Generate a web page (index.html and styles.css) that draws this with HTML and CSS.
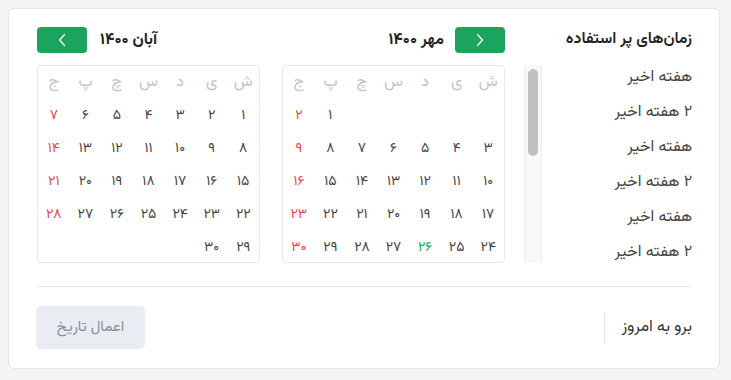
FILE: index.html
```html
<!DOCTYPE html>
<html lang="fa" dir="rtl">
<head>
  <meta charset="UTF-8" />
  <title>انتخاب تاریخ</title>
  <link rel="stylesheet" href="styles.css">
</head>
<body>
  <div class="picker">
    <div class="picker-top">
      <div class="shortcuts">
        <h3 class="shortcuts-title">زمان‌های پر استفاده</h3>
        <div class="shortcuts-body">
          <ul class="shortcuts-list">
            <li>هفته اخیر</li>
            <li>۲ هفته اخیر</li>
            <li>هفته اخیر</li>
            <li>۲ هفته اخیر</li>
            <li>هفته اخیر</li>
            <li>۲ هفته اخیر</li>
          </ul>
          <div class="scroll-track"><div class="scroll-thumb"></div></div>
        </div>
      </div>

      <!-- ماه جاری -->
      <div class="month">
        <div class="month-head">
          <button class="nav-btn">
            <svg width="8" height="14" viewBox="0 0 8 14"><polyline points="1.5,1.5 6.5,7 1.5,12.5" fill="none" stroke="#fff" stroke-width="1.3" stroke-linecap="round" stroke-linejoin="round"/></svg>
          </button>
          <span class="month-title">مهر ۱۴۰۰</span>
        </div>
        <div class="days">
          <span class="wd">ش</span><span class="wd">ی</span><span class="wd">د</span><span class="wd">س</span><span class="wd">چ</span><span class="wd">پ</span><span class="wd">ج</span>
          <span></span><span></span><span></span><span></span><span></span><span>۱</span><span class="fri">۲</span>
          <span>۳</span><span>۴</span><span>۵</span><span>۶</span><span>۷</span><span>۸</span><span class="fri">۹</span>
          <span>۱۰</span><span>۱۱</span><span>۱۲</span><span>۱۳</span><span>۱۴</span><span>۱۵</span><span class="fri">۱۶</span>
          <span>۱۷</span><span>۱۸</span><span>۱۹</span><span>۲۰</span><span>۲۱</span><span>۲۲</span><span class="fri">۲۳</span>
          <span>۲۴</span><span>۲۵</span><span class="today">۲۶</span><span>۲۷</span><span>۲۸</span><span>۲۹</span><span class="fri">۳۰</span>
        </div>
      </div>

      <!-- ماه بعد -->
      <div class="month">
        <div class="month-head end">
          <span class="month-title">آبان ۱۴۰۰</span>
          <button class="nav-btn">
            <svg width="8" height="14" viewBox="0 0 8 14"><polyline points="6.5,1.5 1.5,7 6.5,12.5" fill="none" stroke="#fff" stroke-width="1.3" stroke-linecap="round" stroke-linejoin="round"/></svg>
          </button>
        </div>
        <div class="days">
          <span class="wd">ش</span><span class="wd">ی</span><span class="wd">د</span><span class="wd">س</span><span class="wd">چ</span><span class="wd">پ</span><span class="wd">ج</span>
          <span>۱</span><span>۲</span><span>۳</span><span>۴</span><span>۵</span><span>۶</span><span class="fri">۷</span>
          <span>۸</span><span>۹</span><span>۱۰</span><span>۱۱</span><span>۱۲</span><span>۱۳</span><span class="fri">۱۴</span>
          <span>۱۵</span><span>۱۶</span><span>۱۷</span><span>۱۸</span><span>۱۹</span><span>۲۰</span><span class="fri">۲۱</span>
          <span>۲۲</span><span>۲۳</span><span>۲۴</span><span>۲۵</span><span>۲۶</span><span>۲۷</span><span class="fri">۲۸</span>
          <span>۲۹</span><span>۳۰</span>
        </div>
      </div>
    </div>

    <div class="picker-foot">
      <span class="today-link">برو به امروز</span>
      <button class="apply-btn" disabled>اعمال تاریخ</button>
    </div>
  </div>
</body>
</html>
```

FILE: styles.css
```css
body {
  margin: 0;
  padding: 8px 11px 8px 8px;
  background: #f4f4f5;
  font-family: "Vazirmatn", "Noto Sans Arabic", "DejaVu Sans", sans-serif;
  color: #333;
}

.picker {
  box-sizing: border-box;
  width: 712px;
  height: 361px;
  background: white;
  border: 1px solid #e6e6e8;
  border-radius: 6px;
  padding: 18px 27px;
}

.picker-top {
  display: flex;
  align-items: flex-start;
  padding-bottom: 23px;
  border-bottom: 1px solid #e8e8ea;
}

/* ستون زمان‌های پر استفاده */
.shortcuts {
  width: 168px;
  margin-left: 19px;
}

.shortcuts-title {
  margin: 0;
  height: 26px;
  line-height: 26px;
  font-size: 16px;
  font-weight: 600;
  color: #222;
}

.shortcuts-body {
  display: flex;
  height: 198px;
  margin-top: 12px;
}

.shortcuts-list {
  flex: 1;
  list-style: none;
  margin: 0;
  padding: 3px 0 0 0;
}

.shortcuts-list li {
  height: 20px;
  line-height: 20px;
  margin-bottom: 15px;
  font-size: 16px;
  color: #444;
}

.shortcuts-list li:last-child {
  margin-bottom: 0;
}

/* اسکرول‌بار */
.scroll-track {
  box-sizing: border-box;
  width: 18px;
  background: #f8f8f8;
  border-left: 1px solid #ededed;
  border-right: 1px solid #ededed;
  padding: 4px 3px;
}

.scroll-thumb {
  height: 87px;
  background: #c1c1c1;
  border-radius: 5px;
}

/* تقویم ماه */
.month {
  width: 223px;
}

.month + .month {
  margin-right: 22px;
}

.month-head {
  display: flex;
  align-items: center;
  gap: 11px;
  height: 26px;
  margin-bottom: 12px;
}

.month-head.end {
  justify-content: flex-end;
  gap: 13px;
}

.month-title {
  font-size: 16px;
  font-weight: 700;
  color: #222;
}

.nav-btn {
  width: 50px;
  height: 26px;
  border: none;
  border-radius: 4px;
  background: #1ba45d;
  display: flex;
  align-items: center;
  justify-content: center;
  padding: 0;
  cursor: pointer;
}

.days {
  box-sizing: border-box;
  height: 198px;
  border: 1px solid #e9e9eb;
  border-radius: 4px;
  display: grid;
  grid-template-columns: repeat(7, 1fr);
  grid-auto-rows: 33px;
  align-content: start;
}

.days span {
  display: flex;
  align-items: center;
  justify-content: center;
  font-size: 14px;
  color: #444;
}

.days .wd {
  color: #c4c4c4;
  font-size: 16px;
}

.days .fri {
  color: #e5484d;
}

.days .today {
  color: #1ba45d;
}

/* پایین */
.picker-foot {
  display: flex;
  align-items: center;
  justify-content: space-between;
  margin-top: 19px;
}

.today-link {
  font-size: 16px;
  color: #333;
  padding-left: 17px;
  line-height: 32px;
  border-left: 1px solid #e8e8ea;
}

.apply-btn {
  width: 109px;
  height: 43px;
  border: none;
  border-radius: 5px;
  background: #e9ecf2;
  color: #8a8d93;
  font-family: inherit;
  font-size: 15px;
}
```
